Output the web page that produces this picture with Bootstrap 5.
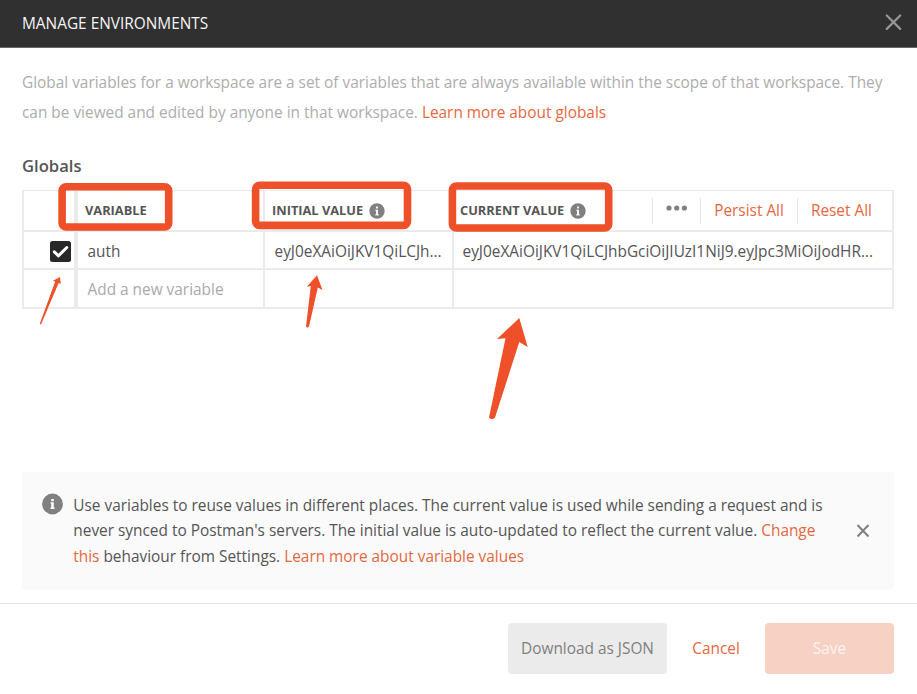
<!DOCTYPE html>
<html lang="en">
<head>
<meta charset="utf-8">
<meta name="viewport" content="width=device-width, initial-scale=1">
<title>Manage Environments</title>
<link href="https://cdn.jsdelivr.net/npm/bootstrap@5.3.0/dist/css/bootstrap.min.css" rel="stylesheet">
<style>
  body { font-family: "Open Sans", "Noto Sans", sans-serif; font-size: 15.4px; color: #555; height: 694px; overflow: hidden; background: #fff; }
  .top-bar { height: 48px; background: #303030; color: #f5f5f5; border-bottom: 1px solid #6a6a6a; padding: 0 15px 0 22px; font-size: 15.4px; }
  .top-bar svg { margin-bottom: 3px; }
  .link-accent { color: #e5683f; text-decoration: none; }
  .page-main { padding: 20px 23px 0 22px; height: 555px; }
  .intro { color: #adadad; line-height: 30.4px; white-space: nowrap; }
  .section-title { font-size: 16.6px; font-weight: 600; line-height: 24px; margin-top: 25.2px; margin-bottom: 12px; }
  .var-table { border: 2px solid #ebebeb; border-top-width: 1px; border-bottom-width: 2px; }
  .var-row { display: grid; grid-template-columns: 54px 187px 189px 1fr; height: 38px; }
  .var-row + .var-row { border-top: 2px solid #ebebeb; }
  .var-row.head-row { height: 39px; font-size: 12.8px; font-weight: 700; }
  .var-row:last-child { height: 39px; }
  .cell { border-right: 2px solid #ebebeb; padding-left: 9.5px; padding-top: 3px; display: flex; align-items: center; white-space: nowrap; min-width: 0; }
  .cell:first-child { border-right-width: 4px; padding: 3px 3px 0 0; justify-content: flex-end; }
  .cell:last-child { border-right: 0; padding-left: 8.5px; }
  .head-row .cell { padding-left: 7px; padding-top: 0; }
  .head-row .cell:last-child { padding-left: 6px; padding-right: 20px; }
  .info-dot { margin-left: 5.5px; }
  .actions { font-size: 15.4px; font-weight: 400; }
  .actions > * { border-left: 1px solid #e4e4e4; height: 26px; display: flex; align-items: center; padding: 0 13px; }
  .actions > :last-child { padding-right: 0; }
  .actions svg { margin-bottom: 5px; }
  .hint { color: #a9a9a9; }
  .note { background: #fafafa; height: 118px; margin-top: 163px; padding: 20px 23px 0 20px; line-height: 25.7px; white-space: nowrap; }
  .note-text { margin-left: 10.3px; padding-top: 0.6px; }
  .bottom-bar { height: 91px; border-top: 1px solid #e2e2e2; padding: 19px 23px 0 0; }
  .bottom-bar .btn { font-size: 15.4px; height: 51px; border: 0; border-radius: 4px; padding: 0; opacity: 1; }
  .btn-download, .btn-download:hover { background: #ebebeb; color: #808080; width: 159px; }
  .btn-cancel { width: 98px; color: #e5683f; }
  .btn-save, .btn-save:disabled { background: #f7d1c3; color: #fdf3ef; width: 129px; }
  .marks { position: absolute; left: 0; top: 0; pointer-events: none; }
</style>
</head>
<body class="position-relative d-flex flex-column">
<header class="top-bar d-flex align-items-center justify-content-between flex-shrink-0">
  <span>MANAGE ENVIRONMENTS</span>
  <svg width="17" height="17" viewBox="0 0 17 17" fill="none" stroke="#979797" stroke-width="2.2" stroke-linecap="round"><path d="M1.8 1.5 15.2 14.9M15.2 1.5 1.8 14.9"/></svg>
</header>
<main class="page-main flex-shrink-0">
  <p class="intro mb-0">Global variables for a workspace are a set of variables that are always available within the scope of that workspace. They<br>can be viewed and edited by anyone in that workspace. <a href="#" class="link-accent">Learn more about globals</a></p>
  <h2 class="section-title">Globals</h2>
  <div class="var-table">
    <div class="var-row head-row">
      <div class="cell"></div>
      <div class="cell">VARIABLE</div>
      <div class="cell">INITIAL VALUE
        <svg class="info-dot" width="16" height="16" viewBox="0 0 16 16"><circle cx="8" cy="8" r="7.7" fill="#808080"/><path d="M7 3.6h2v2H7zM6.2 6.7H9v4.6h.8v1.1H6.2v-1.1H7V7.8h-.8z" fill="#f4f4f4"/></svg>
      </div>
      <div class="cell">CURRENT VALUE
        <svg class="info-dot" width="16" height="16" viewBox="0 0 16 16"><circle cx="8" cy="8" r="7.7" fill="#808080"/><path d="M7 3.6h2v2H7zM6.2 6.7H9v4.6h.8v1.1H6.2v-1.1H7V7.8h-.8z" fill="#f4f4f4"/></svg>
        <div class="actions d-flex ms-auto">
          <span><svg width="21" height="6" viewBox="0 0 21 6" fill="#808080"><circle cx="3" cy="3" r="2.6"/><circle cx="10.7" cy="3" r="2.6"/><circle cx="18.4" cy="3" r="2.6"/></svg></span>
          <a href="#" class="link-accent">Persist All</a>
          <a href="#" class="link-accent">Reset All</a>
        </div>
      </div>
    </div>
    <div class="var-row">
      <div class="cell"><svg width="21" height="21" viewBox="0 0 21 21"><rect width="21" height="21" rx="2.5" fill="#282828"/><path d="M4.3 10.8 8.5 14.8 16.8 6.5" fill="none" stroke="#fff" stroke-width="3" stroke-linecap="round" stroke-linejoin="round"/></svg></div>
      <div class="cell">auth</div>
      <div class="cell">eyJ0eXAiOiJKV1QiLCJh...</div>
      <div class="cell">eyJ0eXAiOiJKV1QiLCJhbGciOiJIUzI1NiJ9.eyJpc3MiOiJodHR...</div>
    </div>
    <div class="var-row">
      <div class="cell"></div>
      <div class="cell hint">Add a new variable</div>
      <div class="cell"></div>
      <div class="cell"></div>
    </div>
  </div>
  <div class="note d-flex">
    <svg class="flex-shrink-0" width="21" height="23" viewBox="0 0 21 23"><circle cx="10.5" cy="12" r="10.4" fill="#808080"/><path d="M9.2 7h2.6v2.2H9.2zM8.5 10.3h3.3v5.3h.8v1.3H8.5v-1.3h.7v-4h-.7z" fill="#fafafa"/></svg>
    <div class="flex-grow-1 note-text">Use variables to reuse values in different places. The current value is used while sending a request and is<br>never synced to Postman's servers. The initial value is auto-updated to reflect the current value. <a href="#" class="link-accent">Change<br>this</a> behaviour from Settings. <a href="#" class="link-accent">Learn more about variable values</a></div>
    <svg class="flex-shrink-0 mt-4" width="16" height="28" viewBox="0 0 16 28" fill="none" stroke="#808080" stroke-width="2"><path d="M2.5 9 13.5 20.5M13.5 9 2.5 20.5"/></svg>
  </div>
</main>
<footer class="bottom-bar d-flex justify-content-end flex-shrink-0">
  <button class="btn btn-download">Download as JSON</button>
  <button class="btn btn-cancel">Cancel</button>
  <button class="btn btn-save" disabled>Save</button>
</footer>
<svg class="marks" width="917" height="694" viewBox="0 0 917 694" fill="#ee5029">
  <g fill="none" stroke="#ee5029" stroke-width="7.6">
    <rect x="62.1" y="186.8" width="106.6" height="40.2" rx="4"/>
    <rect x="255.6" y="185.2" width="151.9" height="40.2" rx="4"/>
    <rect x="452.4" y="186" width="156.3" height="42" rx="4"/>
  </g>
  <path d="M60 277 60.8 284 58.6 283 41 324.5 39.7 324 55.2 281.6 53 280.8Z"/>
  <path d="M317 275.3 322.5 290 317.8 287.6 309 326.5Q307.5 328.5 306 326.5L310.8 286 306.8 286.8Z"/>
  <path d="M519.3 318 527.7 347 519.3 342 495 417.5Q492 420.8 489 417.5L505.5 338.3 497 339Z"/>
</svg>
<script src="https://cdn.jsdelivr.net/npm/bootstrap@5.3.0/dist/js/bootstrap.bundle.min.js"></script>
</body>
</html>
